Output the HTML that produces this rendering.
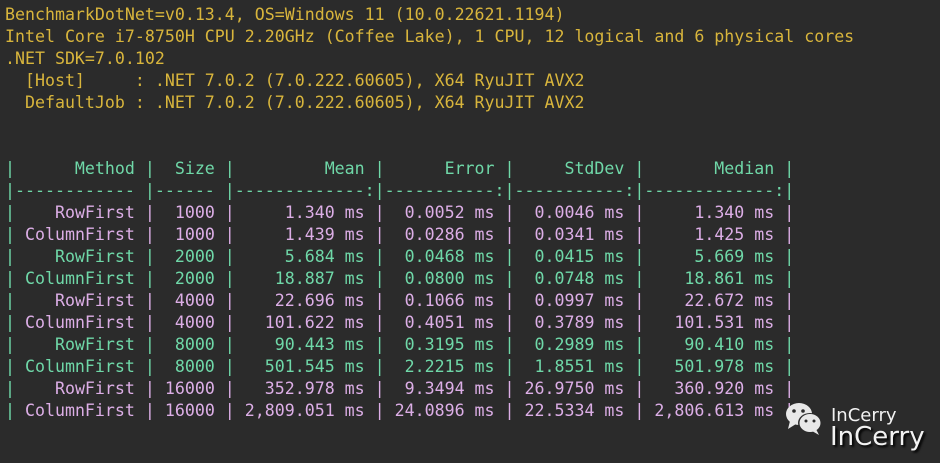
<!DOCTYPE html>
<html><head><meta charset="utf-8"><style>
html,body{margin:0;padding:0;background:#2b2b2b;width:940px;height:463px;overflow:hidden}
pre{margin:0;position:absolute;left:5px;top:4px;font-family:"DejaVu Sans Mono","Liberation Mono",monospace;font-size:16.6px;line-height:22px;color:#d8b53c}
.g{color:#6fd8a8}.p{color:#dcaee6}
.wm{position:absolute;font-family:"DejaVu Sans","Liberation Sans",sans-serif;color:#f2f2f2}
</style></head><body>
<pre>BenchmarkDotNet=v0.13.4, OS=Windows 11 (10.0.22621.1194)
Intel Core i7-8750H CPU 2.20GHz (Coffee Lake), 1 CPU, 12 logical and 6 physical cores
.NET SDK=7.0.102
  [Host]     : .NET 7.0.2 (7.0.222.60605), X64 RyuJIT AVX2
  DefaultJob : .NET 7.0.2 (7.0.222.60605), X64 RyuJIT AVX2


<span class="g">|      Method |  Size |         Mean |      Error |     StdDev |       Median |
|------------ |------ |-------------:|-----------:|-----------:|-------------:|</span>
<span class="g">|</span><span class="p">    RowFirst |  1000 |     1.340 ms |  0.0052 ms |  0.0046 ms |     1.340 ms |</span>
<span class="g">|</span><span class="p"> ColumnFirst |  1000 |     1.439 ms |  0.0286 ms |  0.0341 ms |     1.425 ms |</span>
<span class="g">|    RowFirst |  2000 |     5.684 ms |  0.0468 ms |  0.0415 ms |     5.669 ms |</span>
<span class="g">| ColumnFirst |  2000 |    18.887 ms |  0.0800 ms |  0.0748 ms |    18.861 ms |</span>
<span class="g">|</span><span class="p">    RowFirst |  4000 |    22.696 ms |  0.1066 ms |  0.0997 ms |    22.672 ms |</span>
<span class="g">|</span><span class="p"> ColumnFirst |  4000 |   101.622 ms |  0.4051 ms |  0.3789 ms |   101.531 ms |</span>
<span class="g">|    RowFirst |  8000 |    90.443 ms |  0.3195 ms |  0.2989 ms |    90.410 ms |</span>
<span class="g">| ColumnFirst |  8000 |   501.545 ms |  2.2215 ms |  1.8551 ms |   501.978 ms |</span>
<span class="g">|</span><span class="p">    RowFirst | 16000 |   352.978 ms |  9.3494 ms | 26.9750 ms |   360.920 ms |</span>
<span class="g">|</span><span class="p"> ColumnFirst | 16000 | 2,809.051 ms | 24.0896 ms | 22.5334 ms | 2,806.613 ms |</span></pre>
<svg style="position:absolute;left:784px;top:401px" width="40" height="36" viewBox="0 0 40 36">
<ellipse cx="15" cy="13" rx="13" ry="11" fill="#e8e8e8"/>
<path d="M6 20 L4 28 L12 23Z" fill="#e8e8e8"/>
<ellipse cx="26" cy="22" rx="12" ry="10" fill="#2b2b2b"/>
<ellipse cx="26" cy="22" rx="10.5" ry="9" fill="#e8e8e8"/>
<path d="M32 28 L35 34 L28 30Z" fill="#e8e8e8"/>
<circle cx="10" cy="10" r="1.8" fill="#2b2b2b"/><circle cx="19" cy="10" r="1.8" fill="#2b2b2b"/>
<circle cx="22" cy="20" r="1.5" fill="#2b2b2b"/><circle cx="30" cy="20" r="1.5" fill="#2b2b2b"/>
</svg>
<div class="wm" style="left:831px;top:406px;font-size:18px;line-height:20px">InCerry</div>
<div class="wm" style="left:830px;top:422px;font-size:26px;line-height:30px;text-shadow:2px 2px 2px #000">InCerry</div>
</body></html>
